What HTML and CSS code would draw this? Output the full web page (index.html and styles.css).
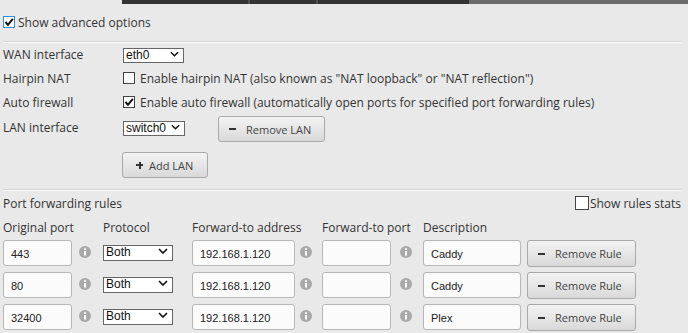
FILE: index.html
```html
<!DOCTYPE html>
<html lang="en">
<head>
    <meta charset="UTF-8">
    <meta name="viewport" content="width=device-width, initial-scale=1.0">
    <title>Firewall</title>
    <link rel="stylesheet" href="styles.css">
</head>
<body>
    <div class="tabs">
        <span class="tab-lead"></span>
        <span class="tab tab-a"></span>
        <span class="tab tab-b"></span>
        <span class="tab tab-c"></span>
        <span class="tab-rest"></span>
    </div>

    <div class="page">
        <label class="check-line advanced">
            <span class="box focus">
                <svg viewBox="0 0 10 10" width="10" height="10"><polyline points="1.5,5 4,7.8 8.8,1.8" fill="none" stroke="#111" stroke-width="2"/></svg>
            </span>
            Show advanced options
        </label>

        <hr class="sep">

        <div class="field first">
            <span class="label">WAN interface</span>
            <span class="select-wrap wan">
                <select><option>eth0</option></select>
                <svg class="chev" viewBox="0 0 10 6" width="9" height="6"><polyline points="1,1 5,5 9,1" fill="none" stroke="#111" stroke-width="1.6"/></svg>
            </span>
        </div>

        <div class="field">
            <span class="label">Hairpin NAT</span>
            <label class="check-line">
                <span class="box"></span>
                Enable hairpin NAT (also known as "NAT loopback" or "NAT reflection")
            </label>
        </div>

        <div class="field">
            <span class="label">Auto firewall</span>
            <label class="check-line">
                <span class="box">
                    <svg viewBox="0 0 10 10" width="10" height="10"><polyline points="1.5,5 4,7.8 8.8,1.8" fill="none" stroke="#111" stroke-width="2"/></svg>
                </span>
                Enable auto firewall (automatically open ports for specified port forwarding rules)
            </label>
        </div>

        <div class="field lan">
            <span class="label">LAN interface</span>
            <span class="select-wrap lan-select">
                <select><option>switch0</option></select>
                <svg class="chev" viewBox="0 0 10 6" width="9" height="6"><polyline points="1,1 5,5 9,1" fill="none" stroke="#111" stroke-width="1.6"/></svg>
            </span>
            <button class="btn remove-lan"><span class="minus"></span>Remove LAN</button>
        </div>

        <div class="add-row">
            <button class="btn add-lan"><span class="plus"></span>Add LAN</button>
        </div>

        <hr class="sep second">

        <div class="rules-head">
            <span>Port forwarding rules</span>
            <label class="check-line stats">
                <span class="box big"></span>Show rules stats
            </label>
        </div>

        <div class="rule-grid headers">
            <span class="span2">Original port</span>
            <span class="span2">Protocol</span>
            <span class="span2">Forward-to address</span>
            <span class="span2">Forward-to port</span>
            <span class="span3">Description</span>
        </div>

        <div class="rule-grid rule">
            <input class="text" value="443">
            <span class="info i-orig"><svg viewBox="0 0 12 12" width="12" height="12"><circle cx="6" cy="6" r="6" fill="#a9a9a9"/><rect x="5" y="5" width="2" height="4.5" fill="#fff"/><circle cx="6" cy="3.2" r="1.1" fill="#fff"/></svg></span>
            <span class="select-wrap proto">
                <select><option>Both</option></select>
                <svg class="chev" viewBox="0 0 10 6" width="10" height="6"><polyline points="1,1 5,5 9,1" fill="none" stroke="#111" stroke-width="1.6"/></svg>
            </span>
            <span></span>
            <input class="text" value="192.168.1.120">
            <span class="info i-addr"><svg viewBox="0 0 12 12" width="12" height="12"><circle cx="6" cy="6" r="6" fill="#a9a9a9"/><rect x="5" y="5" width="2" height="4.5" fill="#fff"/><circle cx="6" cy="3.2" r="1.1" fill="#fff"/></svg></span>
            <input class="text" value="">
            <span class="info i-port"><svg viewBox="0 0 12 12" width="12" height="12"><circle cx="6" cy="6" r="6" fill="#a9a9a9"/><rect x="5" y="5" width="2" height="4.5" fill="#fff"/><circle cx="6" cy="3.2" r="1.1" fill="#fff"/></svg></span>
            <input class="text" value="Caddy">
            <span></span>
            <button class="btn remove-rule"><span class="minus"></span>Remove Rule</button>
        </div>

        <div class="rule-grid rule">
            <input class="text" value="80">
            <span class="info i-orig"><svg viewBox="0 0 12 12" width="12" height="12"><circle cx="6" cy="6" r="6" fill="#a9a9a9"/><rect x="5" y="5" width="2" height="4.5" fill="#fff"/><circle cx="6" cy="3.2" r="1.1" fill="#fff"/></svg></span>
            <span class="select-wrap proto">
                <select><option>Both</option></select>
                <svg class="chev" viewBox="0 0 10 6" width="10" height="6"><polyline points="1,1 5,5 9,1" fill="none" stroke="#111" stroke-width="1.6"/></svg>
            </span>
            <span></span>
            <input class="text" value="192.168.1.120">
            <span class="info i-addr"><svg viewBox="0 0 12 12" width="12" height="12"><circle cx="6" cy="6" r="6" fill="#a9a9a9"/><rect x="5" y="5" width="2" height="4.5" fill="#fff"/><circle cx="6" cy="3.2" r="1.1" fill="#fff"/></svg></span>
            <input class="text" value="">
            <span class="info i-port"><svg viewBox="0 0 12 12" width="12" height="12"><circle cx="6" cy="6" r="6" fill="#a9a9a9"/><rect x="5" y="5" width="2" height="4.5" fill="#fff"/><circle cx="6" cy="3.2" r="1.1" fill="#fff"/></svg></span>
            <input class="text" value="Caddy">
            <span></span>
            <button class="btn remove-rule"><span class="minus"></span>Remove Rule</button>
        </div>

        <div class="rule-grid rule">
            <input class="text" value="32400">
            <span class="info i-orig"><svg viewBox="0 0 12 12" width="12" height="12"><circle cx="6" cy="6" r="6" fill="#a9a9a9"/><rect x="5" y="5" width="2" height="4.5" fill="#fff"/><circle cx="6" cy="3.2" r="1.1" fill="#fff"/></svg></span>
            <span class="select-wrap proto">
                <select><option>Both</option></select>
                <svg class="chev" viewBox="0 0 10 6" width="10" height="6"><polyline points="1,1 5,5 9,1" fill="none" stroke="#111" stroke-width="1.6"/></svg>
            </span>
            <span></span>
            <input class="text" value="192.168.1.120">
            <span class="info i-addr"><svg viewBox="0 0 12 12" width="12" height="12"><circle cx="6" cy="6" r="6" fill="#a9a9a9"/><rect x="5" y="5" width="2" height="4.5" fill="#fff"/><circle cx="6" cy="3.2" r="1.1" fill="#fff"/></svg></span>
            <input class="text" value="">
            <span class="info i-port"><svg viewBox="0 0 12 12" width="12" height="12"><circle cx="6" cy="6" r="6" fill="#a9a9a9"/><rect x="5" y="5" width="2" height="4.5" fill="#fff"/><circle cx="6" cy="3.2" r="1.1" fill="#fff"/></svg></span>
            <input class="text" value="Plex">
            <span></span>
            <button class="btn remove-rule"><span class="minus"></span>Remove Rule</button>
        </div>
    </div>
</body>
</html>
```

FILE: styles.css
```css
body {
    margin: 0;
    background-color: #e9e9e9;
    color: #333;
    font-family: "Open Sans", sans-serif;
    font-size: 12px;
    overflow: hidden;
}
.tabs {
    display: flex;
    height: 4px;
}
.tab-lead {
    width: 122px;
}
.tab {
    background-color: #333;
    border-right: 2px solid #505050;
}
.tab-a { width: 126px; }
.tab-b { width: 66px; }
.tab-c { width: 151px; border-right: 0; }
.tab-rest {
    flex: 1;
    background-color: #6b6b6b;
}
.page {
    padding: 0 7px 0 3px;
}
.check-line {
    display: flex;
    align-items: center;
    gap: 5px;
}
.advanced {
    height: 20px;
    margin-top: 8px;
    gap: 3px;
}
.box {
    box-sizing: border-box;
    width: 12px;
    height: 12px;
    border: 1px solid #444;
    background-color: #fff;
    display: flex;
    align-items: center;
    justify-content: center;
}
.box.focus {
    border-color: #2f8fe6;
}
.box.big {
    width: 14px;
    height: 14px;
}
.sep {
    margin: 9px 0 0 0;
    height: 0;
    border: 0;
    border-top: 1px solid #d2d2d2;
    border-bottom: 1px solid #fff;
}
.sep.second {
    margin-top: 11px;
}
.field {
    display: flex;
    align-items: center;
    height: 24px;
}
.field.first {
    height: 23px;
}
.label {
    width: 120px;
    flex: none;
}
.select-wrap {
    position: relative;
    display: inline-block;
}
.select-wrap select {
    appearance: none;
    -webkit-appearance: none;
    box-sizing: border-box;
    height: 15px;
    border: 1px solid #666;
    border-radius: 0;
    background-color: #fff;
    font-family: "Liberation Sans", Arial, sans-serif;
    font-size: 12px;
    line-height: 13px;
    padding: 0 0 0 2px;
    color: #111;
}
.select-wrap .chev {
    position: absolute;
    right: 5px;
    top: 5px;
    pointer-events: none;
}
.wan select { width: 61px; }
.field.lan {
    height: 30px;
    align-items: flex-start;
}
.field.lan .label {
    margin-top: 5px;
}
.lan-select {
    margin-top: 5px;
}
.lan-select select { width: 62px; }
.btn {
    box-sizing: border-box;
    display: inline-flex;
    align-items: center;
    height: 26px;
    border: 1px solid #a9a9a9;
    border-radius: 3px;
    background: linear-gradient(#f3f3f3, #d9d9d9);
    color: #444;
    font-family: "Open Sans", sans-serif;
    font-size: 11px;
    padding: 0 0 0 10px;
    cursor: pointer;
}
.minus {
    width: 7px;
    height: 2px;
    background-color: #333;
    margin-right: 10px;
}
.plus {
    position: relative;
    width: 7px;
    height: 2px;
    background-color: #333;
    margin-right: 6px;
}
.plus::after {
    content: "";
    position: absolute;
    left: 2.5px;
    top: -2.5px;
    width: 2px;
    height: 7px;
    background-color: #333;
}
.remove-lan {
    width: 107px;
    margin: 2px 0 0 33px;
}
.add-row {
    margin-top: 8px;
    padding-left: 119px;
}
.add-lan {
    width: 86px;
    padding-left: 13px;
}
.rules-head {
    display: flex;
    justify-content: space-between;
    align-items: center;
    height: 24px;
}
.stats {
    gap: 1px;
}
.rule-grid {
    display: grid;
    grid-template-columns: 69px 31px 70px 19px 103px 27px 69px 32px 98px 6px 109px;
}
.headers {
    height: 25px;
    align-items: center;
}
.span2 { grid-column: span 2; }
.span3 { grid-column: span 3; }
.rule {
    height: 26px;
    margin-bottom: 6px;
    align-items: start;
}
.text {
    box-sizing: border-box;
    width: 100%;
    height: 26px;
    border: 1px solid #b7b7b7;
    border-radius: 3px;
    background-color: #fbfbfb;
    padding: 2px 0 0 7px;
    font-family: "Liberation Sans", Arial, sans-serif;
    font-size: 11px;
    color: #222;
}
.info {
    display: flex;
    height: 26px;
    align-items: center;
    margin-top: -1px;
}
.i-orig { padding-left: 7px; }
.i-addr { padding-left: 5px; }
.i-port { padding-left: 9px; }
.proto {
    margin-top: 3px;
}
.proto select {
    width: 70px;
    height: 16px;
}
.remove-rule {
    width: 109px;
    height: 27px;
}
```
